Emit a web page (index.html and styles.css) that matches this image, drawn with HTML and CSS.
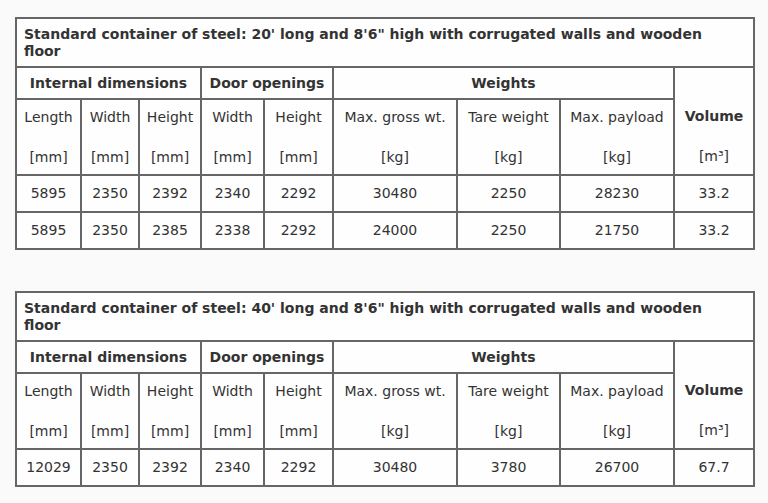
FILE: index.html
```html
<!DOCTYPE html>
<html lang="en">
<head>
<meta charset="utf-8">
<title>Standard containers</title>
<link rel="stylesheet" href="styles.css">
</head>
<body>
<div class="page">
<table class="spec">
  <colgroup>
    <col class="c1"><col class="c2"><col class="c3"><col class="c4"><col class="c5"><col class="c6"><col class="c7"><col class="c8"><col class="c9">
  </colgroup>
  <tr class="title-row">
    <th colspan="9" class="title">Standard container of steel: 20' long and 8'6" high with corrugated walls and wooden<br>floor</th>
  </tr>
  <tr class="group-row">
    <th colspan="3">Internal dimensions</th>
    <th colspan="2">Door openings</th>
    <th colspan="3">Weights</th>
    <th rowspan="2" class="volume"><span class="lbl strong">Volume</span><span class="unit">[m³]</span></th>
  </tr>
  <tr class="unit-row">
    <td><span class="lbl">Length</span><span class="unit">[mm]</span></td>
    <td><span class="lbl">Width</span><span class="unit">[mm]</span></td>
    <td><span class="lbl">Height</span><span class="unit">[mm]</span></td>
    <td><span class="lbl">Width</span><span class="unit">[mm]</span></td>
    <td><span class="lbl">Height</span><span class="unit">[mm]</span></td>
    <td><span class="lbl">Max. gross wt.</span><span class="unit">[kg]</span></td>
    <td><span class="lbl">Tare weight</span><span class="unit">[kg]</span></td>
    <td><span class="lbl">Max. payload</span><span class="unit">[kg]</span></td>
  </tr>
  <tr class="data-row">
    <td>5895</td><td>2350</td><td>2392</td><td>2340</td><td>2292</td><td>30480</td><td>2250</td><td>28230</td><td>33.2</td>
  </tr>
  <tr class="data-row">
    <td>5895</td><td>2350</td><td>2385</td><td>2338</td><td>2292</td><td>24000</td><td>2250</td><td>21750</td><td>33.2</td>
  </tr>
</table>

<table class="spec second">
  <colgroup>
    <col class="c1"><col class="c2"><col class="c3"><col class="c4"><col class="c5"><col class="c6"><col class="c7"><col class="c8"><col class="c9">
  </colgroup>
  <tr class="title-row">
    <th colspan="9" class="title">Standard container of steel: 40' long and 8'6" high with corrugated walls and wooden<br>floor</th>
  </tr>
  <tr class="group-row">
    <th colspan="3">Internal dimensions</th>
    <th colspan="2">Door openings</th>
    <th colspan="3">Weights</th>
    <th rowspan="2" class="volume"><span class="lbl strong">Volume</span><span class="unit">[m³]</span></th>
  </tr>
  <tr class="unit-row">
    <td><span class="lbl">Length</span><span class="unit">[mm]</span></td>
    <td><span class="lbl">Width</span><span class="unit">[mm]</span></td>
    <td><span class="lbl">Height</span><span class="unit">[mm]</span></td>
    <td><span class="lbl">Width</span><span class="unit">[mm]</span></td>
    <td><span class="lbl">Height</span><span class="unit">[mm]</span></td>
    <td><span class="lbl">Max. gross wt.</span><span class="unit">[kg]</span></td>
    <td><span class="lbl">Tare weight</span><span class="unit">[kg]</span></td>
    <td><span class="lbl">Max. payload</span><span class="unit">[kg]</span></td>
  </tr>
  <tr class="data-row">
    <td>12029</td><td>2350</td><td>2392</td><td>2340</td><td>2292</td><td>30480</td><td>3780</td><td>26700</td><td>67.7</td>
  </tr>
</table>
</div>
</body>
</html>
```

FILE: styles.css
```css
html, body {
  margin: 0;
  padding: 0;
  background: #fafafa;
}

.page {
  padding: 17px 15px 0 15px;
  font-family: "DejaVu Sans", Verdana, sans-serif;
  font-size: 14px;
  line-height: 17px;
  color: #333;
}

.spec {
  width: 738px;
  table-layout: fixed;
  border-collapse: collapse;
  border: 2px solid #666;
  background: #fefefe;
}

.second {
  margin-top: 41px;
}

.c1 { width: 65px; }
.c2 { width: 58px; }
.c3 { width: 62px; }
.c4 { width: 63px; }
.c5 { width: 69px; }
.c6 { width: 124px; }
.c7 { width: 103px; }
.c8 { width: 114px; }
.c9 { width: 80px; }

.spec th,
.spec td {
  border: 2px solid #666;
  padding: 0;
  text-align: center;
  vertical-align: middle;
  font-weight: normal;
}

.spec th {
  font-weight: bold;
}

.spec th.title {
  text-align: left;
  padding: 0 7px;
  height: 47px;
}

.group-row th {
  height: 30px;
}

.unit-row td {
  height: 74px;
}

.data-row td {
  height: 35px;
}

.lbl,
.unit {
  display: block;
  white-space: nowrap;
}

.unit {
  margin-top: 23px;
}

.strong {
  font-weight: bold;
}

.spec th.volume {
  font-weight: normal;
  vertical-align: bottom;
  padding-bottom: 9px;
}
```
